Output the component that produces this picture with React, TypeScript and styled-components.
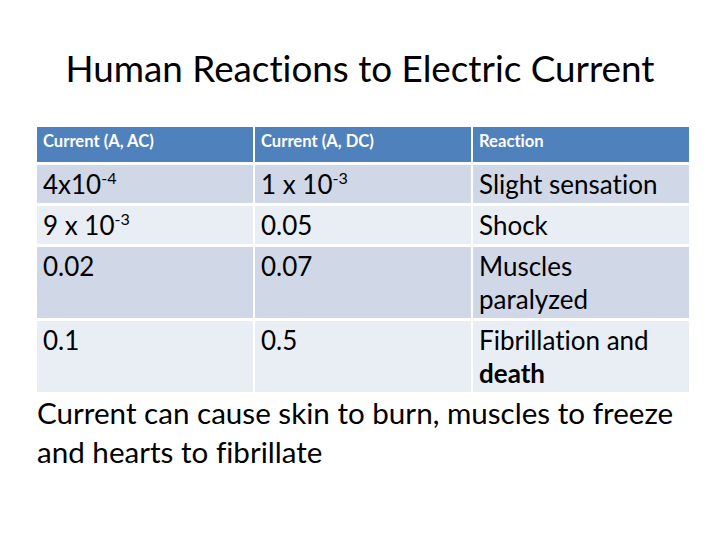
import React from "react";
import styled, { createGlobalStyle } from "styled-components";

const GlobalStyle = createGlobalStyle`
  html, body {
    margin: 0;
    padding: 0;
    background: #ffffff;
  }
  body {
    font-family: Lato, "Open Sans", "Liberation Sans", sans-serif;
    font-variant-ligatures: none;
    color: #000000;
  }
`;

const Slide = styled.div`
  width: 720px;
  height: 540px;
  display: flex;
  flex-direction: column;
  overflow: hidden;
`;

const Title = styled.h1`
  margin: 40px 0 31px;
  height: 56px;
  line-height: 56px;
  font-size: 36.8px;
  font-weight: 400;
  text-align: center;
`;

const Table = styled.div`
  margin-left: 37px;
  width: 652px;
  display: grid;
  grid-template-columns: repeat(3, 216px);
  gap: 3px 2px;
`;

type Tone = "head" | "odd" | "even";

const tones: Record<Tone, string> = {
  head: "#4f81bd",
  odd: "#d0d8e8",
  even: "#e9edf4",
};

const Cell = styled.div<{ $tone: Tone }>`
  background: ${(p) => tones[p.$tone]};
  box-sizing: border-box;
  padding: ${(p) => (p.$tone === "head" ? "4px 6px 0" : "3px 6px 2px")};
  height: ${(p) => (p.$tone === "head" ? "35px" : "auto")};
  color: ${(p) => (p.$tone === "head" ? "#ffffff" : "#000000")};
  font-size: ${(p) => (p.$tone === "head" ? "16.6px" : "26px")};
  font-weight: ${(p) => (p.$tone === "head" ? 700 : 400)};
  line-height: ${(p) => (p.$tone === "head" ? "20px" : "33px")};
`;

const Exp = styled.sup`
  font-size: 0.62em;
  line-height: 0;
  vertical-align: 0.6em;
`;

const Note = styled.p`
  margin: 1px 0 0 37px;
  font-size: 29.6px;
  line-height: 39px;
`;

const rows: { tone: Tone; cells: React.ReactNode[] }[] = [
  {
    tone: "odd",
    cells: [
      <>4x10<Exp>-4</Exp></>,
      <>1 x 10<Exp>-3</Exp></>,
      "Slight sensation",
    ],
  },
  {
    tone: "even",
    cells: [<>9 x 10<Exp>-3</Exp></>, "0.05", "Shock"],
  },
  {
    tone: "odd",
    cells: ["0.02", "0.07", <>Muscles<br />paralyzed</>],
  },
  {
    tone: "even",
    cells: ["0.1", "0.5", <>Fibrillation and<br /><b>death</b></>],
  },
];

export default function App() {
  return (
    <>
      <GlobalStyle />
      <Slide>
        <Title>Human Reactions to Electric Current</Title>
        <Table>
          <Cell $tone="head">Current (A, AC)</Cell>
          <Cell $tone="head">Current (A, DC)</Cell>
          <Cell $tone="head">Reaction</Cell>
          {rows.map((row, i) =>
            row.cells.map((c, j) => (
              <Cell key={`${i}-${j}`} $tone={row.tone}>
                {c}
              </Cell>
            ))
          )}
        </Table>
        <Note>
          Current can cause skin to burn, muscles to freeze
          <br />
          and hearts to fibrillate
        </Note>
      </Slide>
    </>
  );
}
